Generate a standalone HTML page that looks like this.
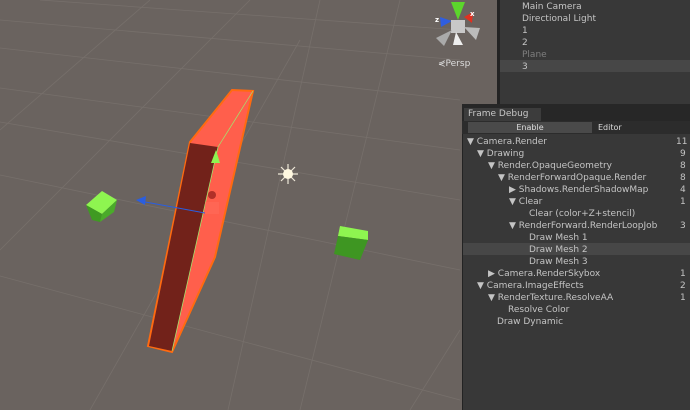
<!DOCTYPE html>
<html><head><style>
body{margin:0;width:690px;height:410px;overflow:hidden;background:#6a635f;font-family:"DejaVu Sans","Liberation Sans",sans-serif;font-size:9px;position:relative}
.t{position:absolute;white-space:nowrap;color:#c4c4c4;line-height:12px}
</style></head><body>
<svg width="690" height="410" style="position:absolute;left:0;top:0">
<g stroke="#7a736e" stroke-width="0.8" fill="none" opacity="0.8">
<line x1="0" y1="88" x2="460" y2="150"/><line x1="0" y1="122" x2="460" y2="200"/>
<line x1="0" y1="175" x2="460" y2="270"/><line x1="0" y1="276" x2="460" y2="400"/>
<line x1="0" y1="48" x2="460" y2="100"/><line x1="0" y1="20" x2="460" y2="60"/>
<line x1="40" y1="0" x2="460" y2="30"/>
<line x1="0" y1="250" x2="250" y2="0"/><line x1="0" y1="130" x2="150" y2="0"/>
<line x1="228" y1="410" x2="320" y2="0"/><line x1="300" y1="410" x2="400" y2="0"/>
<line x1="410" y1="410" x2="460" y2="330"/><line x1="90" y1="410" x2="300" y2="40"/>
</g>
<polygon points="86,205 102,191 117,200 102,214" fill="#8ef550"/>
<polygon points="86,205 102,214 100,222 92,220" fill="#3f9a22"/>
<polygon points="102,214 117,200 114,212 100,222" fill="#4aab2a"/>
<polygon points="340,226 368,231 368,240 338,236" fill="#8ef550"/>
<polygon points="338,236 368,240 360,260 334,254" fill="#3e9622"/>
<polygon points="190,142 232,90 253,91 215,257 172,352 148,346" fill="#ff5f4c" stroke="#ff6a10" stroke-width="2"/>
<polygon points="190,143 218,147 172,351 149,346" fill="#72221a"/>
<polyline points="218,147 253,91" stroke="#9cf070" stroke-width="0.7" fill="none"/>
<polyline points="218,147 172,351" stroke="#9cf070" stroke-width="0.7" fill="none"/>
<polygon points="216,150 211,163 220,163" fill="#8ef550"/>
<circle cx="212" cy="195" r="4" fill="#b03028"/>
<rect x="205" y="202" width="14" height="12" fill="#ff6a5a" opacity="0.6"/>
<line x1="140" y1="201" x2="205" y2="213" stroke="#2a5ee0" stroke-width="1"/>
<polygon points="136,200 146,196 145,205" fill="#2a5ee0"/>
<g stroke="#eee8d8" stroke-width="1.2"><line x1="288" y1="164" x2="288" y2="184"/><line x1="278" y1="174" x2="298" y2="174"/><line x1="281" y1="167" x2="295" y2="181"/><line x1="295" y1="167" x2="281" y2="181"/></g>
<circle cx="288" cy="174" r="5" fill="#fff8e0"/>
<polygon points="451,2 465,2 458,20" fill="#5cd62c"/>
<polygon points="440,17 452,21 441,27" fill="#2f5ee0"/>
<polygon points="464,17 473,12 472,23" fill="#e03020"/>
<rect x="451" y="20" width="14" height="13" fill="#c8c8c8"/>
<polygon points="452,30 436,38 444,46" fill="#aaa"/>
<polygon points="456,32 453,45 463,45" fill="#eee"/>
<polygon points="464,27 480,28 476,40" fill="#bbb"/>
<text x="435" y="22" fill="#fff" font-size="7" font-weight="bold" font-family="DejaVu Sans">z</text>
<text x="470" y="16" fill="#fff" font-size="7" font-weight="bold" font-family="DejaVu Sans">x</text>
</svg>
<div class="t" style="left:438px;top:58px;color:#ddd;font-size:9px">⋞Persp</div>
<div style="position:absolute;left:497px;top:0;width:3px;height:104px;background:#232323"></div>
<div style="position:absolute;left:500px;top:0;width:190px;height:104px;background:#383838"></div>
<div style="position:absolute;left:500px;top:60px;width:190px;height:12px;background:#474747"></div>
<div class="t" style="left:522px;top:1px">Main Camera</div>
<div class="t" style="left:522px;top:13px">Directional Light</div>
<div class="t" style="left:522px;top:25px">1</div>
<div class="t" style="left:522px;top:37px">2</div>
<div class="t" style="left:522px;top:49px;color:#7f7f7f">Plane</div>
<div class="t" style="left:522px;top:61px">3</div>
<div style="position:absolute;left:462px;top:104px;width:228px;height:306px;background:#383838;border-left:1px solid #232323"></div>
<div style="position:absolute;left:462px;top:104px;width:228px;height:17px;background:#272727"></div>
<div class="t" style="left:464px;top:108px;width:73px;height:13px;background:#3c3c3c;padding-left:4px;color:#c8c8c8">Frame Debug</div>
<div style="position:absolute;left:462px;top:121px;width:228px;height:13px;background:#2c2c2c"></div>
<div class="t" style="left:468px;top:122px;width:124px;height:11px;line-height:11px;background:#4a4a4a;text-align:center;color:#ddd;font-size:8px">Enable</div>
<div class="t" style="left:598px;top:122px;line-height:11px;color:#ddd;font-size:8px">Editor</div>
<div style="position:absolute;left:463px;top:243px;width:227px;height:12px;background:#474747"></div>
<div class="t" style="left:467px;top:136px">▼ Camera.Render</div><div class="t" style="left:676px;top:136px">11</div>
<div class="t" style="left:477px;top:148px">▼ Drawing</div><div class="t" style="left:680px;top:148px">9</div>
<div class="t" style="left:488px;top:160px">▼ Render.OpaqueGeometry</div><div class="t" style="left:680px;top:160px">8</div>
<div class="t" style="left:498px;top:172px">▼ RenderForwardOpaque.Render</div><div class="t" style="left:680px;top:172px">8</div>
<div class="t" style="left:509px;top:184px">▶ Shadows.RenderShadowMap</div><div class="t" style="left:680px;top:184px">4</div>
<div class="t" style="left:509px;top:196px">▼ Clear</div><div class="t" style="left:680px;top:196px">1</div>
<div class="t" style="left:529px;top:208px">Clear (color+Z+stencil)</div>
<div class="t" style="left:509px;top:220px">▼ RenderForward.RenderLoopJob</div><div class="t" style="left:680px;top:220px">3</div>
<div class="t" style="left:529px;top:232px">Draw Mesh 1</div>
<div class="t" style="left:529px;top:244px">Draw Mesh 2</div>
<div class="t" style="left:529px;top:256px">Draw Mesh 3</div>
<div class="t" style="left:488px;top:268px">▶ Camera.RenderSkybox</div><div class="t" style="left:680px;top:268px">1</div>
<div class="t" style="left:477px;top:280px">▼ Camera.ImageEffects</div><div class="t" style="left:680px;top:280px">2</div>
<div class="t" style="left:488px;top:292px">▼ RenderTexture.ResolveAA</div><div class="t" style="left:680px;top:292px">1</div>
<div class="t" style="left:508px;top:304px">Resolve Color</div>
<div class="t" style="left:497px;top:316px">Draw Dynamic</div>
</body></html>
